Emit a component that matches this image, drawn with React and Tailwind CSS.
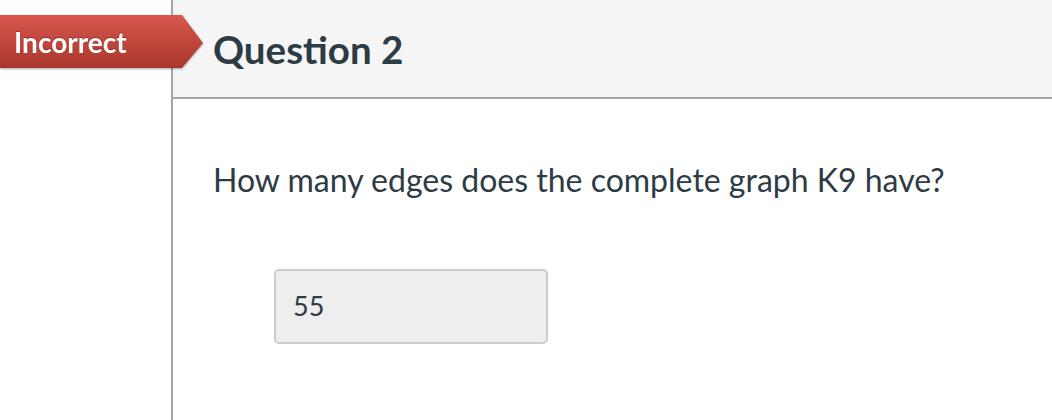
import React from 'react';

const Badge = () => (
  <div className="absolute left-0 top-[15px] h-[53px] w-[203px] drop-shadow-[0_1px_1px_rgba(0,0,0,0.35)]">
    <div
      className="h-full w-full bg-gradient-to-b from-[#d9574d] to-[#a9362d] [clip-path:polygon(0_0,182px_0,203px_28px,182px_53px,0_53px)]"
    >
      <span className="block pl-[14px] pt-[12px] text-[28px] font-bold leading-[30px] text-white [text-shadow:0_-1px_0_rgba(0,0,0,0.3)]">
        Incorrect
      </span>
    </div>
  </div>
);

export default function App() {
  return (
    <div className="relative flex h-[420px] w-[1052px] bg-white font-['Lato',sans-serif] text-[#2d3b45]">
      <div className="w-[171px] shrink-0" />
      <div className="flex flex-1 flex-col border-l-2 border-[#a5a5a5]">
        <div className="h-[99px] border-b-2 border-[#a5a5a5] bg-[#f5f5f5] pl-[40px] pt-[27px]">
          <h2 className="text-[38.5px] font-bold leading-[44px]">Question 2</h2>
        </div>
        <div className="pl-[40px] pt-[61px]">
          <p className="text-[32px] leading-[40px]">How many edges does the complete graph K9 have?</p>
          <div className="ml-[61px] mt-[69px] flex h-[75px] w-[274px] items-center rounded-[5px] border-2 border-[#c9cdd0] bg-[#eeeeee] pl-[17px] text-[27px]">
            55
          </div>
        </div>
      </div>
      <Badge />
    </div>
  );
}
